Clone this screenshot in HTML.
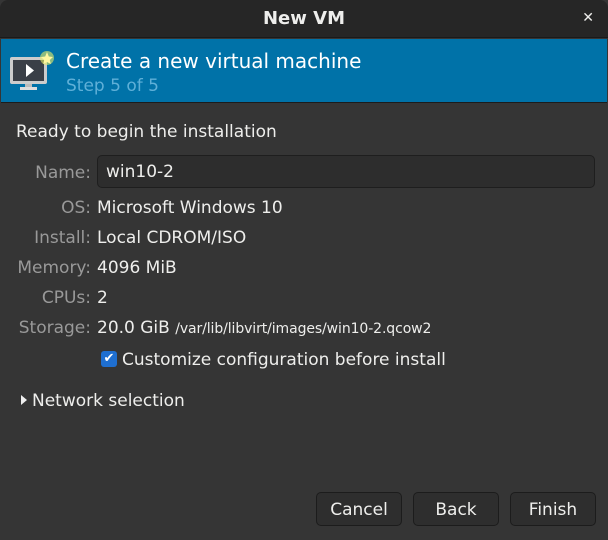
<!DOCTYPE html>
<html><head><style>
*{margin:0;padding:0;box-sizing:border-box}
body{width:608px;height:540px;background:#353535;font-family:"DejaVu Sans","Liberation Sans",sans-serif;color:#eeeeec;position:relative;overflow:hidden;font-size:17px}
.tb{position:absolute;left:0;top:0;width:608px;height:38px;background:#262626;border-bottom:1px solid #1a1a1a;border-radius:8px 8px 0 0}
.tb .t{position:absolute;width:100%;text-align:center;top:8px;font-weight:bold;font-size:18px}
.tb .x{position:absolute;right:14px;top:10px;font-size:14px;font-weight:bold}
.ban{position:absolute;left:1px;top:39px;width:606px;height:64px;background:#0072a8;border-bottom:1px solid #1c1c1c}
.ban .h{position:absolute;left:65px;top:10px;font-size:20px;color:#fff}
.ban .s{position:absolute;left:65px;top:37px;font-size:17px;color:#5fb0d8}
.a{position:absolute;white-space:nowrap}
.l{position:absolute;right:517px;color:#999;white-space:nowrap}
.v{position:absolute;left:97px;white-space:nowrap}
.box{position:absolute;left:97px;top:155px;width:498px;height:33px;background:#2d2d2d;border:1px solid #1e1e1e;border-radius:5px;padding:6px 8px}
.btn{position:absolute;top:492px;width:86px;height:34px;background:#2e2e2e;border:1px solid #1c1c1c;border-radius:5px;text-align:center;line-height:34px}
</style></head><body>
<div class="tb"><div class="t">New VM</div><div class="x">✕</div></div>
<div class="ban">
<svg style="position:absolute;left:8px;top:8px" width="48" height="48" viewBox="0 0 48 48">
<rect x="1" y="10" width="37" height="27" rx="2" fill="#ccc"/>
<rect x="4" y="13" width="31" height="21" fill="#3a3f47"/>
<path d="M17 17 L25 23.5 L17 30 Z" fill="#fff"/>
<rect x="16" y="37" width="7" height="3" fill="#bbb"/>
<rect x="11" y="40" width="17" height="3" fill="#ddd"/>
<circle cx="38" cy="11" r="7" fill="#e6ee66" opacity=".6"/>
<path d="M38 5 L39.8 9.5 L44 10 L40.8 13 L41.8 17 L38 15 L34.2 17 L35.2 13 L32 10 L36.2 9.5Z" fill="#fff8a0"/>
</svg>
<div class="h">Create a new virtual machine</div><div class="s">Step 5 of 5</div></div>
<div class="a" style="left:16px;top:122px">Ready to begin the installation</div>
<div class="l" style="top:163px">Name:</div><div class="box">win10-2</div>
<div class="l" style="top:198px">OS:</div><div class="v" style="top:198px">Microsoft Windows 10</div>
<div class="l" style="top:228px">Install:</div><div class="v" style="top:228px">Local CDROM/ISO</div>
<div class="l" style="top:258px">Memory:</div><div class="v" style="top:258px">4096 MiB</div>
<div class="l" style="top:288px">CPUs:</div><div class="v" style="top:288px">2</div>
<div class="l" style="top:318px">Storage:</div><div class="v" style="top:318px">20.0 GiB <span style="font-size:14px;letter-spacing:-0.1px">/var/lib/libvirt/images/win10-2.qcow2</span></div>
<div class="a" style="left:101px;top:351px;width:16px;height:16px;background:#1f6fd0;border-radius:3px;color:#fff;font-size:13px;line-height:16px;text-align:center;font-weight:bold">✔</div>
<div class="a" style="left:122px;top:350px">Customize configuration before install</div>
<svg class="a" style="left:20px;top:394px" width="8" height="12" viewBox="0 0 8 12"><path d="M1 1 L7 6 L1 11Z" fill="#eee"/></svg>
<div class="a" style="left:32px;top:391px">Network selection</div>
<div class="btn" style="left:316px">Cancel</div>
<div class="btn" style="left:413px">Back</div>
<div class="btn" style="left:510px">Finish</div>
</body></html>
